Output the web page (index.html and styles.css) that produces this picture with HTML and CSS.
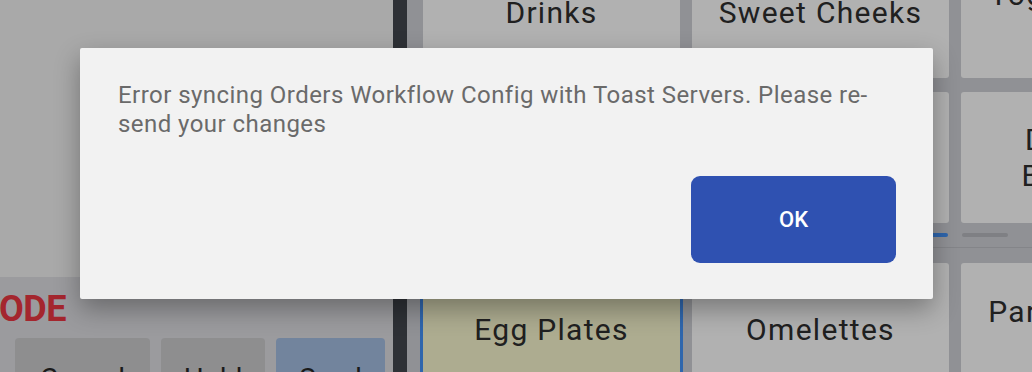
FILE: index.html
```html
<!DOCTYPE html>
<html lang="en">
<head>
  <meta charset="UTF-8" />
  <meta name="viewport" content="width=device-width, initial-scale=1" />
  <title>Orders - Sync Error</title>
  <link rel="stylesheet" href="styles.css">
</head>
<body>
  <div class="app">
    <div class="side">
      <div class="side-top"></div>
      <div class="side-bottom">
        <h2 class="mode">MODE</h2>
        <div class="actions">
          <button class="act act-wide">Cancel</button>
          <button class="act">Hold</button>
          <button class="act act-send">Send</button>
        </div>
      </div>
    </div>

    <div class="divider"></div>

    <div class="menu">
      <div class="groups">
        <div class="tile">Drinks</div>
        <div class="tile">Sweet Cheeks</div>
        <div class="tile">Yogurt &amp; Fruit<br>Bowls</div>
        <div class="tile">Breakfast</div>
        <div class="tile">Sides</div>
        <div class="tile">Desserts<br>Brunches</div>
      </div>

      <div class="pager">
        <span class="dot"></span>
        <span class="dot dot-on"></span>
        <span class="dot"></span>
      </div>

      <div class="items">
        <div class="tile tile-selected">Egg Plates</div>
        <div class="tile">Omelettes</div>
        <div class="tile">Parfait &amp; Fruit<br>Cups</div>
      </div>
    </div>
  </div>

  <div class="overlay">
    <div class="dialog">
      <p class="dialog-text">Error syncing Orders Workflow Config with Toast Servers. Please re-send your changes</p>
      <div class="dialog-actions">
        <button class="ok-btn">OK</button>
      </div>
    </div>
  </div>
</body>
</html>
```

FILE: styles.css
```css
html, body {
  margin: 0;
  height: 100%;
}
body {
  font-family: Roboto, "Liberation Sans", sans-serif;
  background: #909195;
  overflow: hidden;
  position: relative;
}
.app {
  display: flex;
  height: 372px;
  overflow: hidden;
}

/* left order panel */
.side {
  width: 393px;
  flex-shrink: 0;
  display: flex;
  flex-direction: column;
  overflow: hidden;
}
.side-top {
  height: 277px;
  flex-shrink: 0;
  background: #a9a9a9;
}
.side-bottom {
  flex: 1;
  background: #9b9b9e;
  padding: 10px 8px 0 15px;
}
.mode {
  margin: 0 0 0 -47px;
  font-size: 36px;
  font-weight: 700;
  line-height: 44px;
  color: #a4262e;
  letter-spacing: -0.5px;
}
.actions {
  display: flex;
  gap: 11px;
  margin-top: 7px;
}
.act {
  width: 104px;
  height: 70px;
  flex-shrink: 0;
  border: none;
  border-radius: 4px;
  background: #8e8e8f;
  font-family: inherit;
  font-size: 28px;
  line-height: 32px;
  color: #1a1a1a;
  padding: 25px 0 0;
  text-align: center;
  display: flex;
  justify-content: center;
  align-items: flex-start;
}
.act-wide { width: 135px; }
.act-send { width: 109px; background: #72849d; }

.divider {
  width: 14px;
  flex-shrink: 0;
  background: #2e3136;
}

/* right menu grid */
.menu {
  flex: 1;
  padding-left: 16px;
  overflow: hidden;
}
.groups, .items {
  display: grid;
  grid-template-columns: 257px 257px 257px;
  column-gap: 12px;
  row-gap: 14px;
}
.groups {
  margin-top: -53px;
  grid-auto-rows: 131px;
}
.items {
  grid-auto-rows: 134px;
  padding-top: 15px;
  border-top: 1px solid #848589;
}
.tile {
  background: #b1b1b1;
  border-radius: 3px;
  display: flex;
  align-items: center;
  justify-content: center;
  text-align: center;
  font-size: 30px;
  line-height: 36px;
  letter-spacing: 1.3px;
  color: #202020;
  white-space: nowrap;
}
.tile-selected {
  background: #adac90;
  box-shadow: 0 0 0 3px #2f66ad;
}
.pager {
  height: 24px;
  display: flex;
  gap: 14px;
  padding-left: 419px;
  align-items: center;
}
.dot {
  width: 46px;
  height: 4px;
  border-radius: 2px;
  background: #7f8084;
}
.dot-on { background: #2f66ad; }

/* error dialog */
.overlay {
  position: absolute;
  inset: 0;
  padding: 48px 0 0 80px;
}
.dialog {
  width: 853px;
  height: 251px;
  box-sizing: border-box;
  background: #f2f2f2;
  border-radius: 2px;
  padding: 33px 37px 36px 38px;
  box-shadow: 0 10px 26px rgba(0, 0, 0, 0.32);
  display: flex;
  flex-direction: column;
}
.dialog-text {
  margin: 0;
  font-size: 24px;
  line-height: 28.5px;
  letter-spacing: 0.45px;
  color: #6a6a6a;
}
.dialog-actions {
  margin-top: auto;
  display: flex;
  justify-content: flex-end;
}
.ok-btn {
  width: 205px;
  height: 87px;
  border: none;
  border-radius: 9px;
  background: #2f51b1;
  color: #fff;
  font-family: inherit;
  font-size: 22px;
  font-weight: 500;
  cursor: pointer;
}
```
